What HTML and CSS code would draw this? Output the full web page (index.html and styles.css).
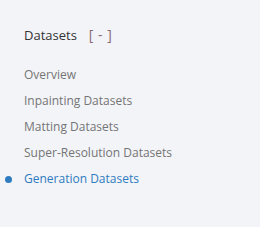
FILE: index.html
```html
<!DOCTYPE html>
<html lang="en">
<head>
    <meta charset="UTF-8">
    <meta name="viewport" content="width=device-width, initial-scale=1.0">
    <title>Datasets</title>
    <link rel="stylesheet" href="styles.css">
</head>
<body>
    <nav class="sidebar">
        <div class="sidebar-title">
            <span>Datasets</span>
            <span class="toggle">[ - ]</span>
        </div>
        <ul class="sidebar-list">
            <li><a href="#">Overview</a></li>
            <li><a href="#">Inpainting Datasets</a></li>
            <li><a href="#">Matting Datasets</a></li>
            <li><a href="#">Super-Resolution Datasets</a></li>
            <li class="active"><a href="#">Generation Datasets</a></li>
        </ul>
    </nav>
</body>
</html>
```

FILE: styles.css
```css
:root {
    --background-color: #f2f4f8;
    --text-color: #333;
    --link-color: #757575;
    --active-color: #2f7bbf;
    --toggle-color: #8a6a70;
}

body {
    font-family: 'Open Sans', sans-serif;
    margin: 0;
    background-color: var(--background-color);
    color: var(--text-color);
}

.sidebar {
    padding: 25px 0 0 24px;
}

.sidebar-title {
    font-size: 13px;
    line-height: 20px;
    display: flex;
    align-items: center;
    gap: 12px;
    margin-bottom: 17px;
}

.toggle {
    color: var(--toggle-color);
    font-size: 14px;
    word-spacing: 1px;
}

.sidebar-list {
    list-style: none;
    margin: 0;
    padding: 0;
}

.sidebar-list li {
    position: relative;
    font-size: 12px;
    line-height: 26px;
}

.sidebar-list a {
    color: var(--link-color);
    text-decoration: none;
}

.sidebar-list li.active a {
    color: var(--active-color);
}

.sidebar-list li.active::before {
    content: "";
    position: absolute;
    left: -19px;
    top: 10px;
    width: 7px;
    height: 7px;
    border-radius: 50%;
    background-color: var(--active-color);
}
```
